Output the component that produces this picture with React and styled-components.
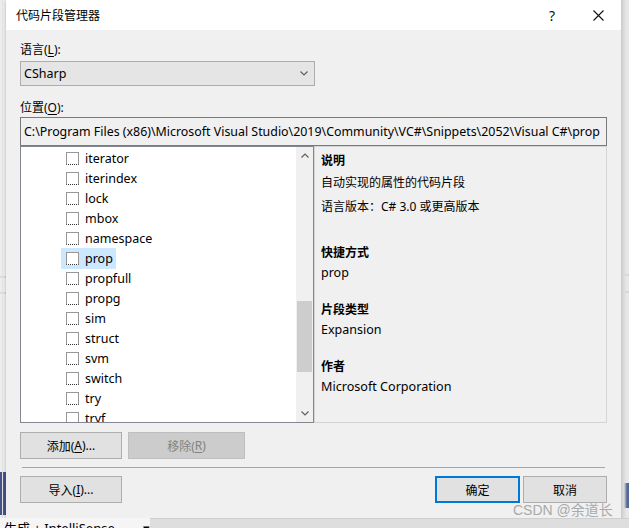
import { createGlobalStyle, styled } from "styled-components"

const GlobalStyle = createGlobalStyle`
    html, body {
        margin: 0;
        padding: 0;
        background: #e9e9e9;
    }
    body {
        font-family: "Noto Sans", "Noto Sans CJK SC", sans-serif;
        font-size: 12px;
        color: #000;
    }
`

const UI_FONT = `"Noto Sans", "Noto Sans CJK SC", sans-serif`

const Page = styled.div`
    position: relative;
    width: 629px;
    height: 528px;
    overflow: hidden;
    display: grid;
    grid-template-columns: 6px 615px 8px;
    grid-template-rows: 518px 10px;
    font-family: ${UI_FONT};
`

const LeftStrip = styled.div`
    background:
        linear-gradient(to right, transparent 2px, #e2e2e2 2px, #e2e2e2 3px, transparent 3px),
        linear-gradient(
            to bottom,
            #ededed 0,
            #ededed 276px,
            #dadada 276px,
            #dadada 278px,
            #ededed 278px,
            #ededed 292px,
            #dadada 292px,
            #dadada 294px,
            #ededed 294px,
            #ededed 472px,
            #45538a 472px,
            #45538a 515px,
            #ededed 515px
        );
`

const RightStrip = styled.div`
    background:
        linear-gradient(to right, #c9c9c9 0, #dcdcdc 3px, rgba(232, 232, 232, 0) 6px),
        linear-gradient(
            to bottom,
            #e8e8e8 0,
            #e8e8e8 274px,
            #d4d6dc 274px,
            #d4d6dc 276px,
            #e8e8e8 276px,
            #e8e8e8 291px,
            #d4d6dc 291px,
            #d4d6dc 293px,
            #e8e8e8 293px,
            #e8e8e8 483px,
            #56659a 483px,
            #56659a 508px,
            #e8e8e8 508px
        );
`

const Dialog = styled.div`
    display: flex;
    flex-direction: column;
    background: #f0f0f0;
    box-shadow: 0 1px 3px rgba(0, 0, 0, 0.25);
`

const TitleBar = styled.div`
    height: 30px;
    background: #fff;
    display: flex;
    align-items: center;
    padding-left: 10px;
    font-size: 12px;
`

const TitleText = styled.div`
    flex: 1;
`

const TitleButton = styled.div`
    width: 46px;
    height: 30px;
    display: flex;
    align-items: center;
    justify-content: center;
    font-size: 14px;
    color: #111;
`

const Body = styled.div`
    display: flex;
    flex-direction: column;
    padding: 0 14px 15px;
`

const Label = styled.div`
    height: 18px;
    line-height: 18px;
    margin-top: ${(p) => p.$top}px;

    & u {
        text-decoration: underline;
        text-underline-offset: 2px;
    }
`

const Combo = styled.div`
    margin-top: 2px;
    width: 295px;
    height: 25px;
    box-sizing: border-box;
    border: 1px solid #adadad;
    background: #e5e5e5;
    display: flex;
    align-items: center;
    padding: 0 6px 0 3px;
    font-size: 12.5px;
`

const ComboText = styled.div`
    flex: 1;
`

const PathBox = styled.div`
    height: 29px;
    box-sizing: border-box;
    border: 1px solid #7a7a7a;
    background: #f0f0f0;
    display: flex;
    align-items: center;
    padding-left: 3px;
    white-space: nowrap;
    overflow: hidden;
    font-size: 12.4px;
`

const ContentRow = styled.div`
    display: flex;
    height: 277px;
`

const ListBox = styled.div`
    width: 294px;
    box-sizing: border-box;
    border: 1px solid #828790;
    background: #fff;
    display: flex;
    overflow: hidden;
`

const Items = styled.div`
    flex: 1;
    padding-top: 1px;
    overflow: hidden;
`

const Row = styled.div`
    height: 20px;
    display: flex;
    align-items: center;
    padding-left: 40px;
`

const ItemBox = styled.div`
    display: flex;
    align-items: center;
    height: 21px;
    padding: 0 3px 0 5px;
    background: ${(p) => (p.$selected ? "#cce8ff" : "transparent")};
`

const Check = styled.span`
    width: 11px;
    height: 11px;
    border: 1px solid #969696;
    border-bottom: 1px dotted #333;
    background: #fff;
`

const ItemText = styled.span`
    margin-left: 6px;
    font-size: 12.5px;
`

const ScrollBar = styled.div`
    width: 17px;
    background: #f0f0f0;
    display: flex;
    flex-direction: column;
`

const ScrollArrow = styled.div`
    height: 17px;
    display: flex;
    align-items: center;
    justify-content: center;
`

const Track = styled.div`
    flex: 1;
`

const Thumb = styled.div`
    margin: 137px 0 0 1px;
    width: 15px;
    height: 71px;
    background: #cdcdcd;
`

const DescPanel = styled.div`
    flex: 1;
    box-sizing: border-box;
    border: 1px solid #d4d4d4;
    background: #f0f0f0;
    padding: 4px 6px 0;
`

const Section = styled.div`
    margin-top: ${(p) => p.$top || 0}px;
`

const Heading = styled.div`
    line-height: 20px;
    font-weight: bold;
`

const Value = styled.div`
    line-height: 20px;
    margin-top: ${(p) => p.$top || 0}px;
    font-size: ${(p) => p.$size || 12}px;
`

const ButtonRow = styled.div`
    display: flex;
    gap: ${(p) => p.$gap || 6}px;
    margin-top: ${(p) => p.$top}px;
`

const Spacer = styled.div`
    flex: 1;
`

const Button = styled.div`
    width: ${(p) => p.$w}px;
    height: 27px;
    box-sizing: border-box;
    display: flex;
    align-items: center;
    justify-content: center;
    background: ${(p) => (p.$disabled ? "#cccccc" : "#e1e1e1")};
    border: ${(p) =>
        p.$default ? "2px solid #0078d7" : p.$disabled ? "1px solid #bfbfbf" : "1px solid #adadad"};
    color: ${(p) => (p.$disabled ? "#838383" : "#000")};

    & u {
        text-underline-offset: 2px;
    }
`

const Separator = styled.div`
    margin: 8px 2px 0;
    height: 1px;
    background: #a6a6a6;
`

const StatusStrip = styled.div`
    grid-column: 1 / -1;
    display: flex;
    background: #dedede;
    box-shadow: inset 0 1px 0 #cfcfcf;
    overflow: hidden;
`

const StatusTab = styled.div`
    width: 150px;
    background: #f5f5f5;
    display: flex;
    align-items: flex-start;
    padding: 2px 0 0 4px;
    box-sizing: border-box;
    font-size: 13px;
    line-height: 16px;
    white-space: nowrap;
`

const StatusText = styled.span`
    flex: 1;
`

const Watermark = styled.div`
    position: absolute;
    left: 513px;
    top: 500px;
    font-family: "Liberation Sans", "Noto Sans CJK SC", sans-serif;
    font-size: 14px;
    line-height: 20px;
    color: #a9a9a9;
    white-space: nowrap;
`

const Chevron = ({ up }) => (
    <svg width="8" height="5" viewBox="0 0 8 5">
        <path
            d={up ? "M0.5 4.5 L4 1 L7.5 4.5" : "M0.5 0.5 L4 4 L7.5 0.5"}
            fill="none"
            stroke="#606060"
            strokeWidth="1.2"
        />
    </svg>
)

const CloseIcon = () => (
    <svg width="11" height="11" viewBox="0 0 11 11">
        <path d="M0.5 0.5 L10.5 10.5 M10.5 0.5 L0.5 10.5" stroke="#111" strokeWidth="1.1" />
    </svg>
)

const snippets = [
    "iterator",
    "iterindex",
    "lock",
    "mbox",
    "namespace",
    "prop",
    "propfull",
    "propg",
    "sim",
    "struct",
    "svm",
    "switch",
    "try",
    "tryf",
]

export default function App() {
    return (
        <>
            <GlobalStyle />
            <Page>
                <LeftStrip />
                <Dialog>
                    <TitleBar>
                        <TitleText>代码片段管理器</TitleText>
                        <TitleButton>?</TitleButton>
                        <TitleButton>
                            <CloseIcon />
                        </TitleButton>
                    </TitleBar>
                    <Body>
                        <Label $top={11}>
                            语言(<u>L</u>):
                        </Label>
                        <Combo>
                            <ComboText>CSharp</ComboText>
                            <Chevron />
                        </Combo>
                        <Label $top={13}>
                            位置(<u>O</u>):
                        </Label>
                        <PathBox>
                            C:\Program Files (x86)\Microsoft Visual Studio\2019\Community\VC#\Snippets\2052\Visual C#\prop
                        </PathBox>
                        <ContentRow>
                            <ListBox>
                                <Items>
                                    {snippets.map((name) => (
                                        <Row key={name}>
                                            <ItemBox $selected={name === "prop"}>
                                                <Check />
                                                <ItemText>{name}</ItemText>
                                            </ItemBox>
                                        </Row>
                                    ))}
                                </Items>
                                <ScrollBar>
                                    <ScrollArrow>
                                        <Chevron up />
                                    </ScrollArrow>
                                    <Track>
                                        <Thumb />
                                    </Track>
                                    <ScrollArrow>
                                        <Chevron />
                                    </ScrollArrow>
                                </ScrollBar>
                            </ListBox>
                            <DescPanel>
                                <Section>
                                    <Heading>说明</Heading>
                                    <Value $top={2}>自动实现的属性的代码片段</Value>
                                    <Value $top={4}>语言版本：C# 3.0 或更高版本</Value>
                                </Section>
                                <Section $top={26}>
                                    <Heading>快捷方式</Heading>
                                    <Value $size={12.5}>prop</Value>
                                </Section>
                                <Section $top={17}>
                                    <Heading>片段类型</Heading>
                                    <Value $size={12.5}>Expansion</Value>
                                </Section>
                                <Section $top={17}>
                                    <Heading>作者</Heading>
                                    <Value $size={12.6}>Microsoft Corporation</Value>
                                </Section>
                            </DescPanel>
                        </ContentRow>
                        <ButtonRow $top={9}>
                            <Button $w={102}>
                                添加(<u>A</u>)...
                            </Button>
                            <Button $w={117} $disabled>
                                移除(<u>R</u>)
                            </Button>
                        </ButtonRow>
                        <Separator />
                        <ButtonRow $top={8} $gap={3}>
                            <Button $w={102}>
                                导入(<u>I</u>)...
                            </Button>
                            <Spacer />
                            <Button $w={85} $default>
                                确定
                            </Button>
                            <Button $w={84}>取消</Button>
                        </ButtonRow>
                    </Body>
                </Dialog>
                <RightStrip />
                <StatusStrip>
                    <StatusTab>
                        <StatusText>生成 + IntelliSense</StatusText>
                        <span>▾</span>
                    </StatusTab>
                </StatusStrip>
                <Watermark>CSDN @余道长</Watermark>
            </Page>
        </>
    )
}
